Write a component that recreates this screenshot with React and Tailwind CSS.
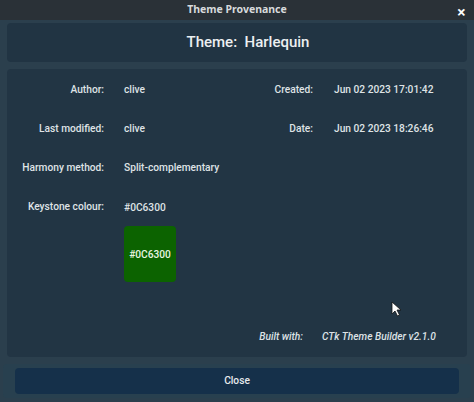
import React from 'react'

const font = { fontFamily: 'Roboto, "Noto Sans", sans-serif' }

function Row({ label, value, label2, value2 }) {
  return (
    <div className="flex h-[39px] items-center">
      <div className="w-[97px] text-right">{label}</div>
      <div className="w-[150px] pl-[20px]">{value}</div>
      {label2 && <div className="w-[59px] text-right">{label2}</div>}
      {value2 && <div className="pl-[21px]">{value2}</div>}
    </div>
  )
}

export default function App() {
  return (
    <div className="relative flex h-[402px] w-[474px] flex-col bg-[#2b3f4d] text-[10.2px] font-medium text-[#dfe3e6]" style={font}>
      <div className="relative flex h-[20px] items-center justify-center bg-[#2a3137] text-[10.5px] font-bold text-[#d8dadc]" style={{ fontFamily: '"Noto Sans", sans-serif' }}>
        Theme Provenance
        <span className="absolute right-[8px] top-[0px] text-[16px] font-bold text-white">×</span>
      </div>

      <div className="mx-[7px] mt-[3px] flex h-[39px] items-center justify-center rounded-[4px] bg-[#213443] pl-[22px] text-[15px] font-medium text-[#eceff1]">
        Theme:&nbsp;&nbsp;Harlequin
      </div>

      <div className="mx-[7px] mt-[7px] flex h-[288px] flex-col rounded-[4px] bg-[#223544] pt-[1px]">
        <Row label="Author:" value="clive" label2="Created:" value2="Jun 02 2023 17:01:42" />
        <Row label="Last modified:" value="clive" label2="Date:" value2="Jun 02 2023 18:26:46" />
        <Row label="Harmony method:" value="Split-complementary" />
        <div className="flex pt-[12px]">
          <div className="w-[97px] text-right">Keystone colour:</div>
          <div className="flex flex-col pl-[20px]">
            <div className="pt-[1px]">#0C6300</div>
            <div className="mt-[11px] flex h-[56px] w-[52px] items-center justify-center rounded-[4px] bg-[#0c6300] text-[#e8f5e0]">
              #0C6300
            </div>
          </div>
        </div>
        <div className="mt-auto mb-[13px] flex italic text-[#dde2e6]">
          <div className="w-[296px] text-right">Built with:</div>
          <div className="pl-[19px]">CTk Theme Builder v2.1.0</div>
        </div>
      </div>

      <div className="mx-[3px] mt-[7px] flex h-[34px] items-center rounded-[4px] bg-[#28404f] px-[12px]">
        <div className="flex h-[26px] w-full items-center justify-center rounded-[4px] bg-[#15304a] text-[#e6e9ec]">Close</div>
      </div>

      <svg className="absolute left-[391px] top-[301px]" width="11" height="16" viewBox="0 0 11 16">
        <path d="M1 1 L1 13 L4 10 L6.5 15 L8.5 14 L6 9 L10 9 Z" fill="#fff" stroke="#111" strokeWidth="0.8" />
      </svg>
    </div>
  )
}
